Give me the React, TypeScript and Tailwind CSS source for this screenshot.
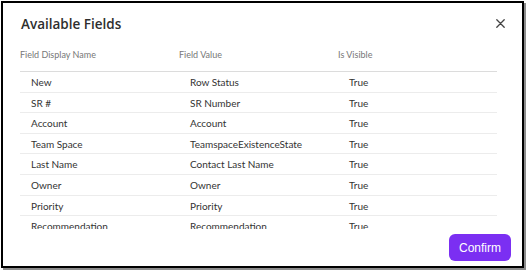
import React from "react";

const rows: [string, string, string][] = [
  ["New", "Row Status", "True"],
  ["SR #", "SR Number", "True"],
  ["Account", "Account", "True"],
  ["Team Space", "TeamspaceExistenceState", "True"],
  ["Last Name", "Contact Last Name", "True"],
  ["Owner", "Owner", "True"],
  ["Priority", "Priority", "True"],
  ["Recommendation", "Recommendation", "True"],
  ["Status", "Status", "True"],
];

export default function App() {
  return (
    <div className="w-[527px] h-[271px] bg-white pl-px pt-px" style={{ fontFamily: "Lato, 'Open Sans', sans-serif" }}>
      <div className="w-[523px] h-[267px] border-2 border-black bg-white shadow-[2px_2px_0_#8c8c8c] flex flex-col">
        <div className="px-[17px] pt-[11px] flex items-center justify-between h-[31px]">
          <div
            className="text-[13.5px] leading-[20px] font-semibold text-[#2e2e2e] pl-px"
            style={{ fontFamily: "'Open Sans', sans-serif" }}
          >
            Available Fields
          </div>
          <svg width="9" height="9" viewBox="0 0 9 9" className="mt-[-1px]">
            <path d="M0.8 0.8 L8.2 8.2 M8.2 0.8 L0.8 8.2" stroke="#444" strokeWidth="1.3" strokeLinecap="round" />
          </svg>
        </div>
        <div className="px-[17px]">
          <div className="grid grid-cols-3 w-[477px] pt-[15px] pb-[10px] border-b border-[#dcdcdc] text-[9px] leading-[12px] text-[#777]">
            <div>Field Display Name</div>
            <div>Field Value</div>
            <div>Is Visible</div>
          </div>
          <div className="h-[157px] overflow-hidden w-[477px]">
            {rows.map((r, i) => (
              <div key={i} className="grid grid-cols-3 h-[20.6px] border-b border-[#ececec] text-[10px] leading-[19.6px] text-[#333] pt-px">
                <div className="pl-[11px]">{r[0]}</div>
                <div className="pl-[11px]">{r[1]}</div>
                <div className="pl-[11px]">{r[2]}</div>
              </div>
            ))}
          </div>
        </div>
        <div className="flex justify-end pr-[11px] pt-[5px]">
          <button
            className="w-[62px] h-[27px] rounded-[6px] bg-[#7b2ff2] text-white text-[12px]"
            style={{ fontFamily: "'Liberation Sans', Arial, sans-serif" }}
          >
            Confirm
          </button>
        </div>
      </div>
    </div>
  );
}
